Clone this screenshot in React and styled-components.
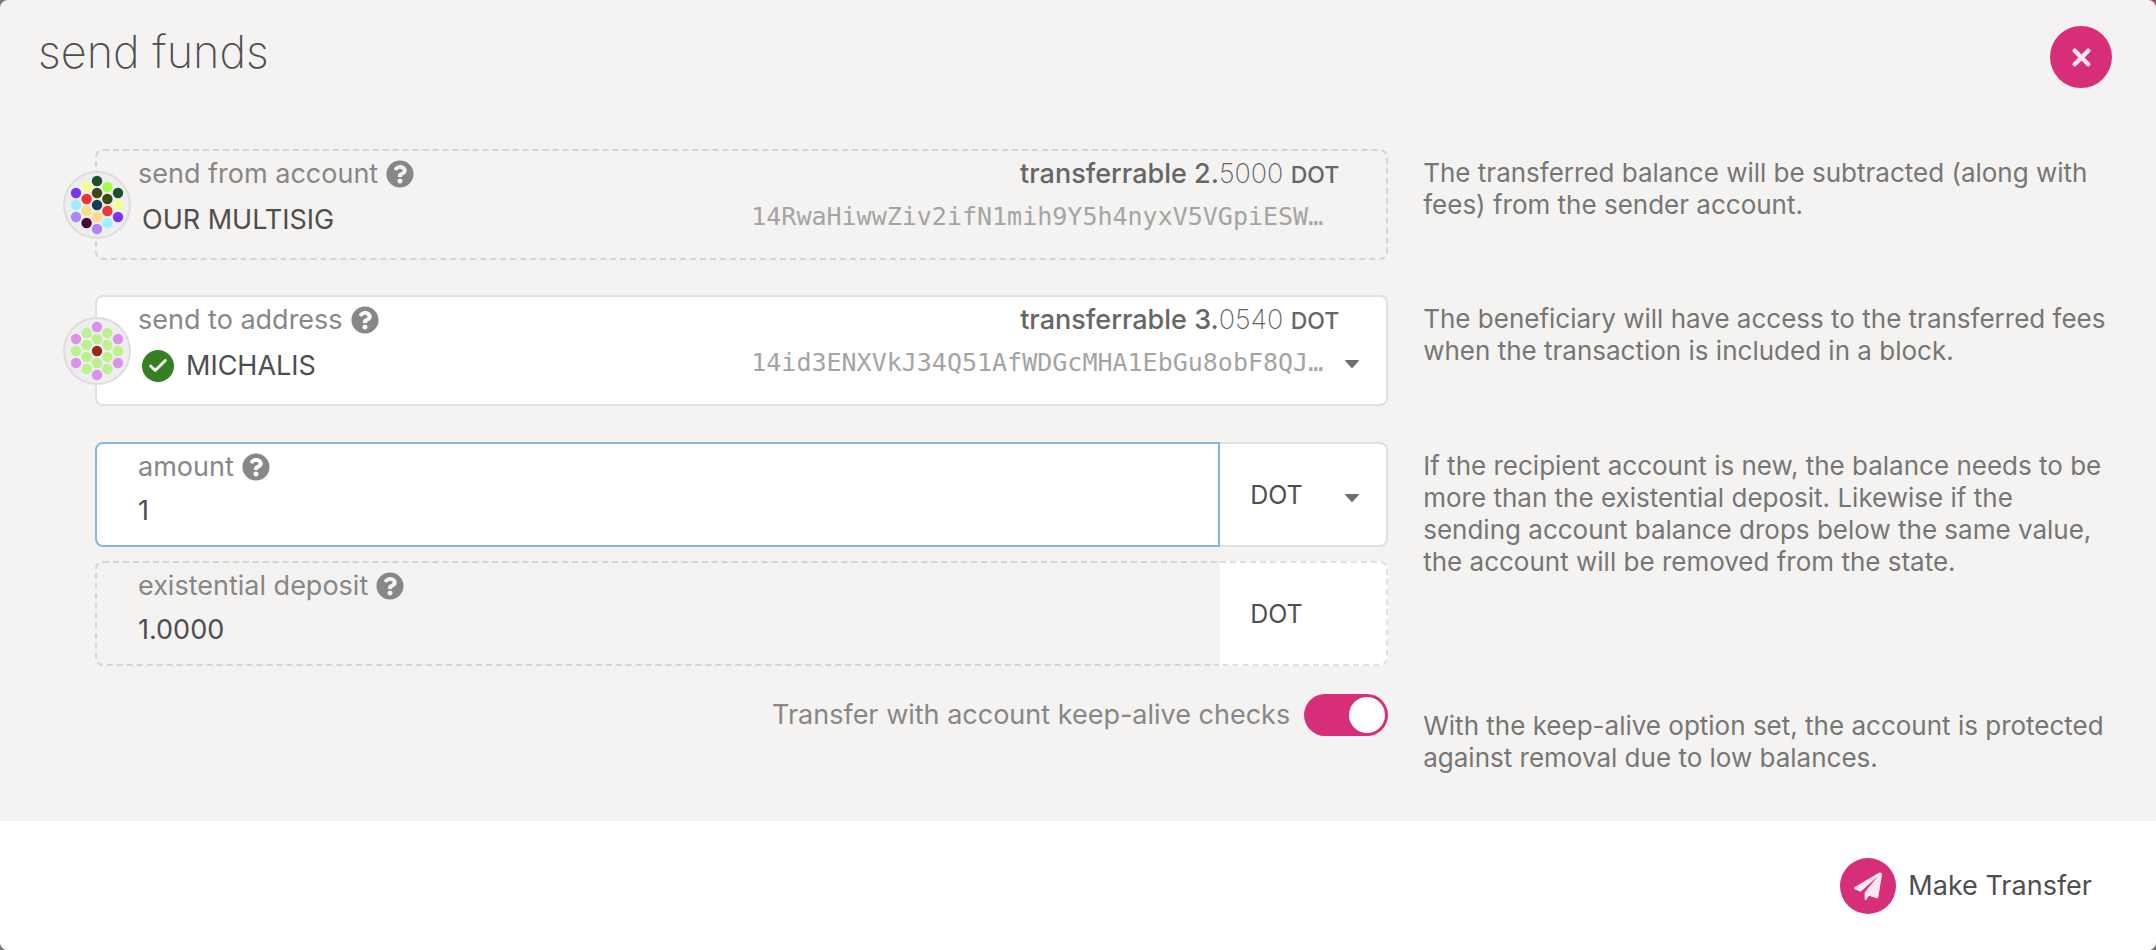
import { useState } from "react";
import styled, { createGlobalStyle } from "styled-components";
import { Check, X } from "lucide-react";
import { FaQuestionCircle } from "react-icons/fa";

const GlobalStyle = createGlobalStyle`
  * {
    box-sizing: border-box;
  }
  body {
    margin: 0;
    background: linear-gradient(to bottom left, #a34a75, #777 10%);
    color: #4e4e4e;
    font-family: Inter, "Liberation Sans", sans-serif;
    font-size: 27px;
    line-height: 32px;
  }
  button, input, select {
    font: inherit;
    color: inherit;
  }
`;

const Modal = styled.main`
  display: flex;
  flex-direction: column;
  min-height: 100vh;
  background: #f4f3f1;
  border-radius: 8px;
  overflow: hidden;
`;
const Header = styled.header`
  display: flex;
  justify-content: space-between;
  align-items: flex-start;
  padding: 26px 44px 0 38px;
`;
const Title = styled.h1`
  margin: 0;
  font-size: 45px;
  line-height: 52px;
  font-weight: 200;
`;
const CloseButton = styled.button`
  display: flex;
  align-items: center;
  justify-content: center;
  width: 62px;
  height: 62px;
  padding: 0;
  border: none;
  border-radius: 50%;
  background: #d62e78;
  color: #fbe6ef;
  cursor: pointer;
`;
const Content = styled.section`
  padding: 61px 40px 47px 95px;
`;
const Row = styled.div`
  display: grid;
  grid-template-columns: minmax(0, 28fr) minmax(0, 15fr);
  column-gap: 35px;
  margin-bottom: ${(props) => props.$gap || 0}px;
`;
const Help = styled.p`
  margin: 0;
  padding-top: ${(props) => (props.$low ? 16 : 8)}px;
  color: #767674;
  font-size: 26px;
`;
const Box = styled.div`
  position: relative;
  display: flex;
  justify-content: space-between;
  height: 111px;
  padding: 7px 47px 0 41px;
  border: 2px ${(props) => (props.$locked ? "dashed" : "solid")} rgba(34, 36, 38, 0.14);
  border-radius: 8px;
  background: ${(props) => (props.$locked ? "transparent" : "#fff")};
`;
const Avatar = styled.svg`
  position: absolute;
  left: -34px;
  top: 20px;
  width: 68px;
  height: 68px;
  border: 2px solid #ddd;
  border-radius: 50%;
  background: #eee;
`;
const Side = styled.div`
  display: flex;
  flex-direction: column;
  gap: ${(props) => (props.$right ? 12 : 14)}px;
  align-items: ${(props) => (props.$right ? "flex-end" : "flex-start")};
`;
const Label = styled.label`
  display: flex;
  align-items: center;
  gap: 8px;
  color: #888785;
`;
const Name = styled.div`
  display: flex;
  align-items: center;
  gap: 12px;
  padding-left: 4px;
`;
const Tick = styled.span`
  display: flex;
  align-items: center;
  justify-content: center;
  width: 32px;
  height: 32px;
  border-radius: 50%;
  background: #358022;
  color: #fff;
`;
const PlainSelect = styled.select`
  appearance: none;
  padding: 0;
  border: none;
  outline: none;
  background: transparent;
`;
const Balance = styled.div`
  color: #666;
  font-weight: 500;
`;
const Decimals = styled.span`
  font-weight: 200;
`;
const Unit = styled.span`
  font-size: 23px;
`;
const Address = styled.div`
  padding-right: 16px;
  color: #a5a4a2;
  font-family: "DejaVu Sans Mono", monospace;
  font-size: 25px;
  line-height: 28px;
`;
const BoxCaret = styled.svg`
  position: absolute;
  right: 27px;
  top: 63px;
  width: 14px;
  height: 8px;
`;
const AmountBox = styled.div`
  display: grid;
  grid-template-columns: minmax(0, 1fr) 168px;
  height: 105px;
  margin-bottom: ${(props) => props.$gap || 0}px;
`;
const Field = styled.div`
  display: flex;
  flex-direction: column;
  gap: 12px;
  padding: 7px 41px 0;
  border: 2px solid #85b7d9;
  border-radius: 8px 0 0 8px;
  background: #fff;
  ${(props) =>
    props.$locked &&
    `
    border: 2px dashed rgba(34, 36, 38, 0.14);
    border-right: 2px solid transparent;
    background: transparent;
  `}
`;
const Input = styled.input`
  width: 100%;
  height: 32px;
  padding: 0;
  border: none;
  outline: none;
  background: transparent;
`;
const UnitBox = styled.div`
  display: flex;
  align-items: center;
  justify-content: space-between;
  padding: 0 27px 0 30px;
  border: 2px ${(props) => (props.$locked ? "dashed" : "solid")} rgba(34, 36, 38, 0.14);
  border-left: none;
  border-radius: 0 8px 8px 0;
  background: #fff;
  font-size: 25px;
`;
const Caret = styled.svg`
  width: 14px;
  height: 8px;
  margin-top: 6px;
`;
const ToggleRow = styled.label`
  display: flex;
  align-items: center;
  justify-content: flex-end;
  gap: 14px;
  height: 42px;
  color: #888785;
`;
const Toggle = styled.input`
  appearance: none;
  display: flex;
  align-items: center;
  width: 84px;
  height: 42px;
  margin: 0;
  padding: 3px;
  border-radius: 21px;
  background: #ccc;
  cursor: pointer;
  &::before {
    content: "";
    width: 36px;
    height: 36px;
    border-radius: 50%;
    background: #fff;
  }
  &:checked {
    justify-content: flex-end;
    background: #d62e78;
  }
`;
const Footer = styled.footer`
  display: flex;
  flex: 1;
  justify-content: flex-end;
  align-items: flex-start;
  padding: 37px 64px 36px;
  background: #fff;
`;
const SendButton = styled.button`
  display: flex;
  align-items: center;
  gap: 12px;
  padding: 0;
  border: none;
  background: transparent;
  cursor: pointer;
`;
const SendIcon = styled.svg`
  width: 56px;
  height: 56px;
  border-radius: 50%;
  background: #d62e78;
`;

// dot centres, column by column
const dots = [
  [-21, -12], [-21, 0], [-21, 12],
  [-10.4, -18], [-10.4, -6], [-10.4, 6], [-10.4, 18],
  [0, -24], [0, -12], [0, 0], [0, 12], [0, 24],
  [10.4, -18], [10.4, -6], [10.4, 6], [10.4, 18],
  [21, -12], [21, 0], [21, 12],
];

const multisigColors = [
  "#7f33f5", "#9cf0ff", "#ac87f5",
  "#f3ff8e", "#ef3535", "#fbdc8b", "#470a34",
  "#1f4d2f", "#3f4a10", "#163e4e", "#fbdc8b", "#ac87f5",
  "#a3ff50", "#3f4a10", "#ef3535", "#9cf0ff",
  "#1f4d2f", "#f3ff8e", "#7f33f5",
];

const pink = "#d993ec";
const lime = "#bdf08f";
const michalisColors = [
  pink, lime, pink,
  lime, lime, lime, lime,
  pink, lime, "#962b1d", lime, pink,
  lime, lime, lime, lime,
  pink, lime, pink,
];

const Identicon = ({ colors }) => (
  <Avatar viewBox="-32 -32 64 64" aria-hidden="true">
    {dots.map(([x, y], i) => (
      <circle key={i} cx={x} cy={y} r="5.2" fill={colors[i]} />
    ))}
  </Avatar>
);

const Triangle = () => <path d="M0.5 0h13c0.5 0 0.6 0.6 0.3 1L7.6 7.7a0.8 0.8 0 0 1-1.2 0L0.2 1C-0.1 0.6 0 0 0.5 0z" fill="#6e6e6e" />;

const Transferrable = ({ whole, decimals }) => (
  <Balance>
    transferrable {whole}.<Decimals>{decimals}</Decimals> <Unit>DOT</Unit>
  </Balance>
);

const App = () => {
  const [amount, setAmount] = useState("1");
  const [keepAlive, setKeepAlive] = useState(true);

  return (
    <>
      <GlobalStyle />
      <Modal>
        <Header>
          <Title>send funds</Title>
          <CloseButton aria-label="close">
            <X size={27} strokeWidth={4} />
          </CloseButton>
        </Header>
        <Content>
          <Row $gap={35}>
            <Box $locked>
              <Identicon colors={multisigColors} />
              <Side>
                <Label as="div">
                  send from account <FaQuestionCircle size={28} />
                </Label>
                <Name>OUR MULTISIG</Name>
              </Side>
              <Side $right>
                <Transferrable whole="2" decimals="5000" />
                <Address>14RwaHiwwZiv2ifN1mih9Y5h4nyxV5VGpiESW…</Address>
              </Side>
            </Box>
            <Help>The transferred balance will be subtracted (along with fees) from the sender account.</Help>
          </Row>
          <Row $gap={36}>
            <Box>
              <Identicon colors={michalisColors} />
              <Side>
                <Label htmlFor="recipient">
                  send to address <FaQuestionCircle size={28} />
                </Label>
                <Name>
                  <Tick>
                    <Check size={22} strokeWidth={3} />
                  </Tick>
                  <PlainSelect id="recipient">
                    <option>MICHALIS</option>
                  </PlainSelect>
                </Name>
              </Side>
              <Side $right>
                <Transferrable whole="3" decimals="0540" />
                <Address>14id3ENXVkJ34Q51AfWDGcMHA1EbGu8obF8QJ…</Address>
              </Side>
              <BoxCaret viewBox="0 0 14 8">
                <Triangle />
              </BoxCaret>
            </Box>
            <Help>The beneficiary will have access to the transferred fees when the transaction is included in a block.</Help>
          </Row>
          <Row $gap={28}>
            <div>
              <AmountBox $gap={14}>
                <Field>
                  <Label htmlFor="amount">
                    amount <FaQuestionCircle size={28} />
                  </Label>
                  <Input id="amount" value={amount} onChange={(e) => setAmount(e.target.value)} />
                </Field>
                <UnitBox>
                  <PlainSelect aria-label="unit">
                    <option>DOT</option>
                  </PlainSelect>
                  <Caret viewBox="0 0 14 8">
                    <Triangle />
                  </Caret>
                </UnitBox>
              </AmountBox>
              <AmountBox>
                <Field $locked>
                  <Label htmlFor="deposit">
                    existential deposit <FaQuestionCircle size={28} />
                  </Label>
                  <Input id="deposit" value="1.0000" disabled />
                </Field>
                <UnitBox $locked>DOT</UnitBox>
              </AmountBox>
            </div>
            <Help>
              If the recipient account is new, the balance needs to be more than the existential deposit. Likewise if
              the sending account balance drops below the same value, the account will be removed from the state.
            </Help>
          </Row>
          <Row>
            <ToggleRow>
              Transfer with account keep-alive checks
              <Toggle type="checkbox" checked={keepAlive} onChange={() => setKeepAlive(!keepAlive)} />
            </ToggleRow>
            <Help $low>
              With the keep-alive option set, the account is protected against removal due to low balances.
            </Help>
          </Row>
        </Content>
        <Footer>
          <SendButton>
            <SendIcon viewBox="0 0 168 168" aria-hidden="true">
              <path
                d="M121 42L44 87c-3 2-3 5 0 7l18 7 52-46-40 48v20c0 3 3 4 5 2l8-12 22 8c3 1 6-1 6-4l11-67c1-4-2-6-5-4z"
                fill="#fbe6ef"
              />
            </SendIcon>
            Make Transfer
          </SendButton>
        </Footer>
      </Modal>
    </>
  );
};

export default App;
